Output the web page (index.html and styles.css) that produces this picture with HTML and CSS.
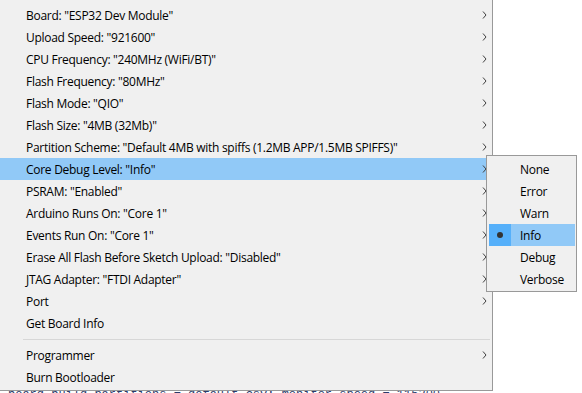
FILE: index.html
```html
<!DOCTYPE html>
<html>
<head>
<meta charset="utf-8">
<link rel="stylesheet" href="styles.css">
</head>
<body>
<div class="page">
  <div class="menu">
    <div class="item"><span class="label">Board: "ESP32 Dev Module"</span><svg class="arrow" viewBox="0 0 5 8"><path d="M1 0.5 L4 4 L1 7.5"/></svg></div>
    <div class="item"><span class="label">Upload Speed: "921600"</span><svg class="arrow" viewBox="0 0 5 8"><path d="M1 0.5 L4 4 L1 7.5"/></svg></div>
    <div class="item"><span class="label">CPU Frequency: "240MHz (WiFi/BT)"</span><svg class="arrow" viewBox="0 0 5 8"><path d="M1 0.5 L4 4 L1 7.5"/></svg></div>
    <div class="item"><span class="label">Flash Frequency: "80MHz"</span><svg class="arrow" viewBox="0 0 5 8"><path d="M1 0.5 L4 4 L1 7.5"/></svg></div>
    <div class="item"><span class="label">Flash Mode: "QIO"</span><svg class="arrow" viewBox="0 0 5 8"><path d="M1 0.5 L4 4 L1 7.5"/></svg></div>
    <div class="item"><span class="label">Flash Size: "4MB (32Mb)"</span><svg class="arrow" viewBox="0 0 5 8"><path d="M1 0.5 L4 4 L1 7.5"/></svg></div>
    <div class="item"><span class="label">Partition Scheme: "Default 4MB with spiffs (1.2MB APP/1.5MB SPIFFS)"</span><svg class="arrow" viewBox="0 0 5 8"><path d="M1 0.5 L4 4 L1 7.5"/></svg></div>
    <div class="item active"><span class="label">Core Debug Level: "Info"</span><svg class="arrow" viewBox="0 0 5 8"><path d="M1 0.5 L4 4 L1 7.5"/></svg></div>
    <div class="item"><span class="label">PSRAM: "Enabled"</span><svg class="arrow" viewBox="0 0 5 8"><path d="M1 0.5 L4 4 L1 7.5"/></svg></div>
    <div class="item"><span class="label">Arduino Runs On: "Core 1"</span><svg class="arrow" viewBox="0 0 5 8"><path d="M1 0.5 L4 4 L1 7.5"/></svg></div>
    <div class="item"><span class="label">Events Run On: "Core 1"</span><svg class="arrow" viewBox="0 0 5 8"><path d="M1 0.5 L4 4 L1 7.5"/></svg></div>
    <div class="item"><span class="label">Erase All Flash Before Sketch Upload: "Disabled"</span><svg class="arrow" viewBox="0 0 5 8"><path d="M1 0.5 L4 4 L1 7.5"/></svg></div>
    <div class="item"><span class="label">JTAG Adapter: "FTDI Adapter"</span><svg class="arrow" viewBox="0 0 5 8"><path d="M1 0.5 L4 4 L1 7.5"/></svg></div>
    <div class="item"><span class="label">Port</span><svg class="arrow" viewBox="0 0 5 8"><path d="M1 0.5 L4 4 L1 7.5"/></svg></div>
    <div class="item"><span class="label">Get Board Info</span></div>
    <div class="separator"></div>
    <div class="item"><span class="label">Programmer</span><svg class="arrow" viewBox="0 0 5 8"><path d="M1 0.5 L4 4 L1 7.5"/></svg></div>
    <div class="item"><span class="label">Burn Bootloader</span></div>
  </div>
  <div class="below"><div class="below-text">board_build.partitions = default.csv; monitor_speed = 115200</div></div>

  <div class="submenu">
    <div class="sub-item"><span class="check"></span><span class="sub-label">None</span></div>
    <div class="sub-item"><span class="check"></span><span class="sub-label">Error</span></div>
    <div class="sub-item"><span class="check"></span><span class="sub-label">Warn</span></div>
    <div class="sub-item selected"><span class="check"><span class="dot"></span></span><span class="sub-label">Info</span></div>
    <div class="sub-item"><span class="check"></span><span class="sub-label">Debug</span></div>
    <div class="sub-item"><span class="check"></span><span class="sub-label">Verbose</span></div>
  </div>
</div>
</body>
</html>
```

FILE: styles.css
```css
html, body {
  margin: 0;
  padding: 0;
  background: #ffffff;
}

.page {
  position: relative;
  width: 582px;
  height: 393px;
  overflow: hidden;
  font-family: "Open Sans", "Noto Sans", sans-serif;
  font-size: 12px;
  letter-spacing: -0.28px;
  color: #000000;
}

.menu {
  width: 490px;
  padding: 4px 2px 2px 0;
  background: #f0f0f0;
  border-right: 1px solid #999999;
  border-bottom: 1px solid #999999;
}

.item {
  height: 22px;
  display: flex;
  align-items: center;
  padding-left: 26px;
}

.item.active {
  background: #91c9f7;
}

.label {
  flex: 1;
  white-space: nowrap;
}

.arrow {
  width: 5px;
  height: 8px;
  margin-right: 3px;
  fill: none;
  stroke: #404040;
  stroke-width: 1;
}

.separator {
  height: 10px;
  display: flex;
  flex-direction: column;
  justify-content: center;
  padding-left: 23px;
}

.separator::before {
  content: "";
  display: block;
  height: 1px;
  background: #d7d7d7;
}

.below {
  display: flow-root;
  height: 2px;
  overflow: hidden;
  padding-left: 8px;
}

.below-text {
  margin-top: -3px;
  font-family: "Liberation Mono", monospace;
  font-size: 12px;
  line-height: 14px;
  letter-spacing: 0;
  color: #2a3a6a;
  white-space: nowrap;
}

.submenu {
  position: absolute;
  left: 486px;
  top: 155px;
  width: 86px;
  padding: 2px 1px 1px 2px;
  background: #f0f0f0;
  border: 1px solid #999999;
}

.sub-item {
  height: 22px;
  display: flex;
  align-items: center;
}

.sub-item.selected {
  background: #91c9f7;
}

.check {
  width: 22px;
  height: 22px;
  margin-right: 9px;
  display: flex;
  align-items: center;
  justify-content: center;
}

.sub-item.selected .check {
  background: #56b0fa;
}

.dot {
  width: 6px;
  height: 6px;
  border-radius: 50%;
  background: #333333;
}

.sub-label {
  white-space: nowrap;
}
```
